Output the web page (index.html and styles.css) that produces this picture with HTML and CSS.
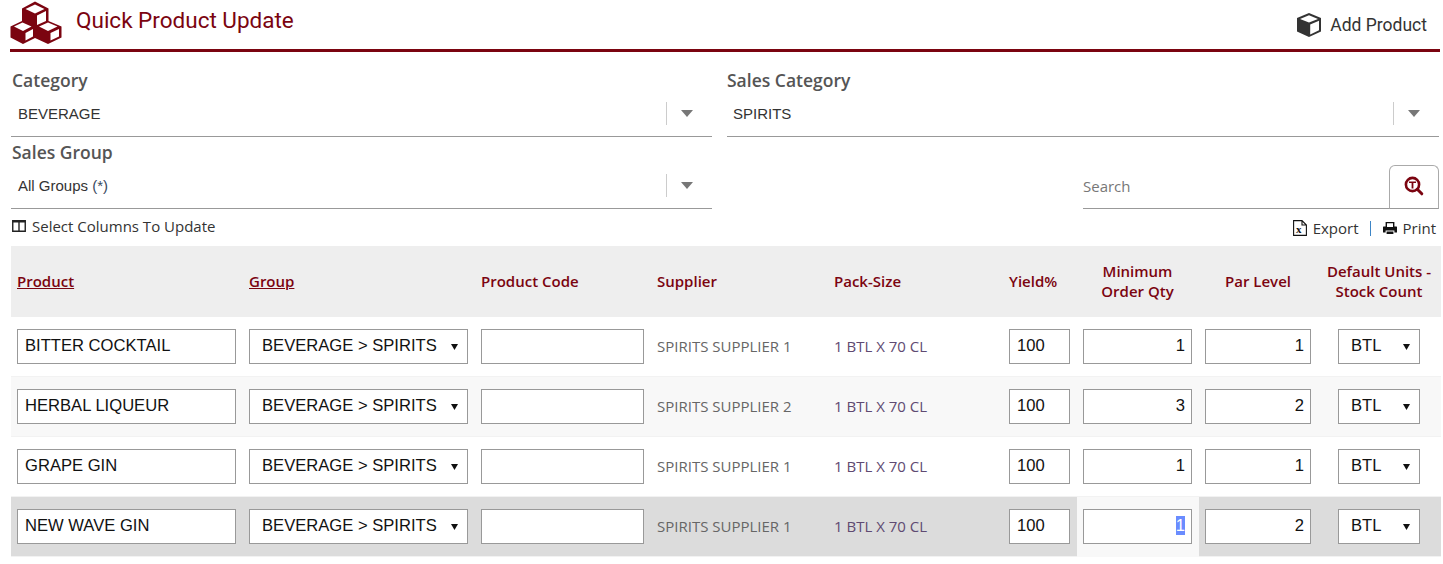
FILE: index.html
```html
<!DOCTYPE html>
<html lang="en">
<head>
<meta charset="utf-8">
<title>Quick Product Update</title>
<link rel="stylesheet" href="styles.css">
</head>
<body>
<header class="topbar">
  <div class="brand">
    <svg class="logo" viewBox="0 0 52 43" width="52" height="43" aria-hidden="true">
      <path d="M25 0.5 38.5 7.5V20L51.5 25.5V36.5L38 43 25 37 13 43 0.5 36.5V25.5L12 20V7.5Z" fill="#7b0410"/>
      <path d="M25 3.5 34.5 8 25 12.5 15.5 8Z" fill="#fff"/>
      <path d="M36 10V20L27 24V14.5Z" fill="#fff"/>
      <path d="M12.5 21.5 21.5 25.5 13 30 4 25.5Z" fill="#fff"/>
      <path d="M23 28V35.5L15.5 39.5V32Z" fill="#fff"/>
      <path d="M38 21.5 47.5 25.5 38 30 29 25.5Z" fill="#fff"/>
      <path d="M49 28V35.5L40.5 39.5V32Z" fill="#fff"/>
    </svg>
    <h1 class="title">Quick Product Update</h1>
  </div>
  <a class="add" href="#">
    <svg viewBox="0 0 26 26" width="26" height="26" aria-hidden="true">
      <path d="M13 1 25 6V19.5L13 25 1 19.5V6Z" fill="#333"/>
      <path d="M13 3.2 22 7 13 10.6 4 7Z" fill="#fff"/>
      <path d="M14.2 12.4 23 8.8V18.2L14.2 22.4Z" fill="#fff"/>
    </svg>
    <span>Add Product</span>
  </a>
</header>

<section class="filters">
  <div class="field">
    <label class="flabel">Category</label>
    <div class="combo"><span>BEVERAGE</span><i class="sep"></i><i class="tri"></i></div>
  </div>
  <div class="field">
    <label class="flabel">Sales Category</label>
    <div class="combo"><span>SPIRITS</span><i class="sep"></i><i class="tri"></i></div>
  </div>
  <div class="field">
    <label class="flabel">Sales Group</label>
    <div class="combo"><span>All Groups <em>(*)</em></span><i class="sep"></i><i class="tri"></i></div>
  </div>
  <div class="searchwrap">
    <div class="search">Search</div>
    <button class="sbtn" type="button" aria-label="Search">
      <svg viewBox="0 0 20 20" width="20" height="20" aria-hidden="true">
        <circle cx="8.5" cy="8.5" r="6.6" fill="none" stroke="#7b0410" stroke-width="2.6"/>
        <path d="M5 5.5h7v1.6H9.4V12.5H7.6V7.1H5Z" fill="#7b0410"/>
        <path d="M13.3 13.3 17.8 17.8" stroke="#7b0410" stroke-width="3" stroke-linecap="round"/>
      </svg>
    </button>
  </div>
</section>

<div class="tools">
  <a class="tool" href="#">
    <svg class="col" viewBox="0 0 14 12" width="14" height="12" aria-hidden="true"><path d="M.75.75h12.5v10.5H.75ZM7 .75v10.5" fill="none" stroke="#222" stroke-width="1.4"/><path d="M.5.5h13v2H.5Z" fill="#222"/></svg>
    Select Columns To Update
  </a>
  <div class="actions">
    <a class="tool" href="#">
      <svg viewBox="0 0 14 16" width="14" height="16" aria-hidden="true"><path d="M.6.6H9L13.4 5V15.4H.6ZM9 .6V5h4.4" fill="none" stroke="#111" stroke-width="1.1"/><text x="3" y="13.2" class="xl">x</text></svg>
      Export
    </a>
    <i class="bar"></i>
    <a class="tool" href="#">
      <svg viewBox="0 0 14 14" width="14" height="14" aria-hidden="true"><path d="M2.6 1h8.8v4.6H13.6a.4.4 0 0 1 .4.4v5.6h-2.6V9.4H2.6v2.2H0V6a.4.4 0 0 1 .4-.4H2.6ZM4 2.2V6h6V2.2ZM3.6 10.4h6.8V13H3.6Z" fill="#111" fill-rule="evenodd"/></svg>
      Print
    </a>
  </div>
</div>

<table class="grid">
  <colgroup>
    <col class="c1"><col class="c2"><col class="c3"><col class="c4"><col class="c5"><col class="c6"><col class="c7"><col class="c8"><col class="c9">
  </colgroup>
  <thead>
    <tr>
      <th><a href="#">Product</a></th>
      <th><a href="#">Group</a></th>
      <th>Product Code</th>
      <th>Supplier</th>
      <th>Pack-Size</th>
      <th>Yield%</th>
      <th class="mid">Minimum<br>Order Qty</th>
      <th class="mid">Par Level</th>
      <th class="mid">Default Units -<br>Stock Count</th>
    </tr>
  </thead>
  <tbody>
    <tr>
      <td><input class="box" value="BITTER COCKTAIL"></td>
      <td><select class="box"><option>BEVERAGE &gt; SPIRITS</option></select></td>
      <td><input class="box"></td>
      <td class="sup">SPIRITS SUPPLIER 1</td>
      <td class="pack">1 BTL X 70 CL</td>
      <td><input class="box" value="100"></td>
      <td><input class="box num" value="1"></td>
      <td><input class="box num" value="1"></td>
      <td class="mid"><select class="box unit"><option>BTL</option></select></td>
    </tr>
    <tr class="alt">
      <td><input class="box" value="HERBAL LIQUEUR"></td>
      <td><select class="box"><option>BEVERAGE &gt; SPIRITS</option></select></td>
      <td><input class="box"></td>
      <td class="sup">SPIRITS SUPPLIER 2</td>
      <td class="pack">1 BTL X 70 CL</td>
      <td><input class="box" value="100"></td>
      <td><input class="box num" value="3"></td>
      <td><input class="box num" value="2"></td>
      <td class="mid"><select class="box unit"><option>BTL</option></select></td>
    </tr>
    <tr>
      <td><input class="box" value="GRAPE GIN"></td>
      <td><select class="box"><option>BEVERAGE &gt; SPIRITS</option></select></td>
      <td><input class="box"></td>
      <td class="sup">SPIRITS SUPPLIER 1</td>
      <td class="pack">1 BTL X 70 CL</td>
      <td><input class="box" value="100"></td>
      <td><input class="box num" value="1"></td>
      <td><input class="box num" value="1"></td>
      <td class="mid"><select class="box unit"><option>BTL</option></select></td>
    </tr>
    <tr class="hover">
      <td><input class="box" value="NEW WAVE GIN"></td>
      <td><select class="box"><option>BEVERAGE &gt; SPIRITS</option></select></td>
      <td><input class="box"></td>
      <td class="sup">SPIRITS SUPPLIER 1</td>
      <td class="pack">1 BTL X 70 CL</td>
      <td><input class="box" value="100"></td>
      <td class="active"><div class="box num fake"><span class="sel">1</span></div></td>
      <td><input class="box num" value="2"></td>
      <td class="mid"><select class="box unit"><option>BTL</option></select></td>
    </tr>
  </tbody>
</table>
</body>
</html>
```
FILE: styles.css
```css
* { box-sizing: border-box; }
html, body { margin: 0; padding: 0; }
body {
  width: 1443px;
  height: 564px;
  overflow: hidden;
  background: #fff;
  font-family: "Open Sans", sans-serif;
  color: #333;
}
a { text-decoration: none; color: inherit; }

.topbar {
  margin: 0 3px 0 10px;
  height: 52px;
  border-bottom: 3px solid #7b0410;
  display: flex;
  justify-content: space-between;
}
.brand { display: flex; align-items: flex-start; }
.logo { margin-top: 1px; }
.title {
  margin: 5px 0 0 14px;
  font: 400 22.5px/30px Roboto, sans-serif;
  color: #7b0410;
}
.add {
  display: flex;
  align-items: center;
  gap: 8px;
  height: 49px;
  padding-right: 13px;
  font: 400 17.5px/26px Roboto, sans-serif;
  color: #333;
}

.filters {
  margin: 0 4px 0 11px;
  display: grid;
  grid-template-columns: 701px 712px;
  column-gap: 15px;
  padding-top: 16px;
}
.field { height: 72px; }
.flabel {
  display: block;
  font-size: 17.5px;
  font-weight: 600;
  line-height: 24px;
  color: #555;
}
.field:nth-child(odd) .flabel { padding-left: 1px; }
.combo {
  height: 45px;
  border-bottom: 1px solid #999;
  display: flex;
  align-items: center;
  padding: 0 19px 1px 7px;
  font: 400 15px/20px "Liberation Sans", sans-serif;
  color: #333;
}
.field:nth-child(2) .combo { padding-left: 6px; }
.combo span { flex: 1; }
.combo em { font-style: normal; color: #3a4a60; }
.sep { width: 1px; height: 23px; background: #ccc; margin-right: 14px; }
.tri {
  width: 0; height: 0;
  border-left: 6.5px solid transparent;
  border-right: 6.5px solid transparent;
  border-top: 7px solid #777;
}
.searchwrap {
  display: flex;
  align-items: flex-start;
  justify-content: flex-end;
  height: 72px;
  padding-top: 25px;
}
.search {
  width: 306px;
  height: 44px;
  border-bottom: 1px solid #999;
  font-size: 15px;
  line-height: 43px;
  color: #777;
}
.sbtn {
  width: 50px;
  height: 44px;
  padding: 0 0 3px;
  border: 1px solid #aaa;
  border-bottom-color: #999;
  border-radius: 6px 6px 0 0;
  background: #fff;
  display: flex;
  align-items: center;
  justify-content: center;
}

.tools {
  margin: 0 7px 0 12px;
  height: 34px;
  display: flex;
  justify-content: space-between;
  align-items: flex-start;
  font-size: 15px;
  line-height: 20px;
  color: #333;
}
.tool { display: flex; align-items: center; gap: 6px; padding-top: 4px; }
.actions { display: flex; align-items: flex-start; margin-top: 2px; }
.bar { width: 1px; height: 15px; background: #3d85c6; margin: 7px 12px 0 11px; }
.xl { font: 700 11px "Liberation Serif", serif; fill: #111; }

.grid {
  margin-left: 11px;
  width: 1430px;
  table-layout: fixed;
  border-collapse: collapse;
}
.c1 { width: 232px; } .c2 { width: 232px; } .c3 { width: 176px; }
.c4 { width: 177px; } .c5 { width: 175px; } .c6 { width: 74px; }
.c7 { width: 122px; } .c8 { width: 119px; } .c9 { width: 123px; }
thead tr { background: #eee; height: 71px; }
th {
  padding: 0 7px 2px 6px;
  text-align: left;
  font-size: 15px;
  font-weight: 600;
  line-height: 20px;
  color: #7b0410;
}
th.mid, td.mid { text-align: center; }
th a { text-decoration: underline; }
tbody tr { height: 60px; box-shadow: inset 0 -1px 0 #f2f2f2; }
tbody tr.alt { background: #f8f8f8; }
tbody tr.hover { background: #dcdcdc; }
td { padding: 0 7px 1px 6px; vertical-align: middle; font-size: 15px; }
td.active { background: #f8f8f8; }
td.sup { color: #666; padding-bottom: 3px; }
td.pack { color: #5f4a72; padding-bottom: 3px; }
.box {
  display: block;
  width: 100%;
  height: 35px;
  border: 1px solid #999;
  border-radius: 0;
  background: #fff;
  color: #111;
  font: 400 16.6px "Liberation Sans", sans-serif;
  padding: 0 7px 2px;
  outline: none;
}
select.box {
  appearance: none;
  -webkit-appearance: none;
  padding: 0 12px 3px;
  background: #fff url("data:image/svg+xml,%3Csvg xmlns='http://www.w3.org/2000/svg' width='7' height='6'%3E%3Cpath d='M0 0h7L3.5 6Z' fill='%23111'/%3E%3C/svg%3E") no-repeat right 9px center;
}
.num { text-align: right; padding-right: 6px; }
.fake { line-height: 31px; }
.sel { background: #6a8cff; color: #fff; }
.unit { display: inline-block; width: 82px; }
```
